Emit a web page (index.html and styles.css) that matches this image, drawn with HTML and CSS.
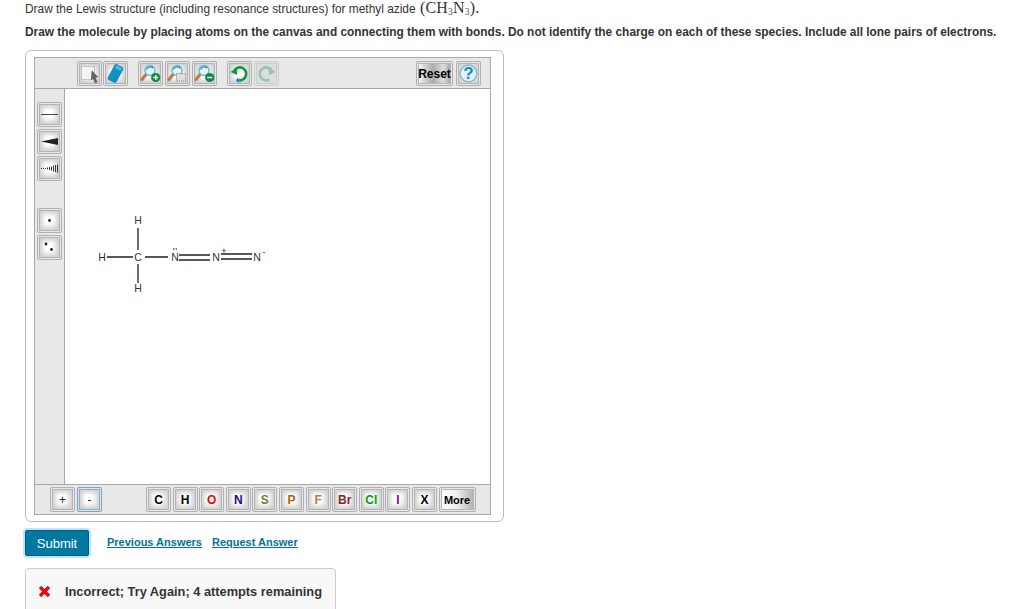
FILE: index.html
```html
<!DOCTYPE html>
<html lang="en">
<head>
<meta charset="utf-8">
<title>Lewis structure</title>
<link rel="stylesheet" href="styles.css">
</head>
<body>
<main class="page">
  <p class="prompt">Draw the Lewis structure (including resonance structures) for methyl azide <span class="formula">(CH<sub>3</sub>N<sub>3</sub>).</span></p>
  <p class="instr">Draw the molecule by placing atoms on the canvas and connecting them with bonds. Do not identify the charge on each of these species. Include all lone pairs of electrons.</p>

  <section class="panel">
    <div class="editor">
      <div class="toolbar">
        <div class="group tight">
          <button class="tool" aria-label="Select"><svg class="ico" viewBox="0 0 25 25"><rect x="4.500" y="5.500" width="13" height="13" fill="#f4f4f4" stroke="#999" stroke-dasharray="1 1"/><path d="M15 10l5.500 6-2.500 .3 2 4.700-1.800 .7-2-4.700-1.800 1.800z" fill="#666" stroke="#333" stroke-width=".5"/></svg></button>
          <button class="tool" aria-label="Erase"><svg class="ico" viewBox="0 0 25 25"><rect x="7.500" y="3.500" width="10" height="18" rx="2.500" fill="#0f93c4" transform="rotate(28 12.500 12.500)"/><path d="M13.500 4.200l5.500 2.900-1.500 3-5.500-2.900z" fill="#4db8dc"/></svg></button>
        </div>
        <div class="group">
          <button class="tool" aria-label="Zoom in"><svg class="ico" viewBox="0 0 25 25"><path d="M8 13.500l-4 5" stroke="#c07a35" stroke-width="3" stroke-linecap="round"/><circle cx="12" cy="9.500" r="5" fill="#e4f4fa" stroke="#6bb8d6" stroke-width="1.500"/><path d="M8.500 8.500a4 4 0 0 1 6.500-1.500" fill="none" stroke="#1f86b0" stroke-width="1.200"/><circle cx="17.700" cy="16.500" r="4.600" fill="#108a3c"/><path d="M15.200 16.500h5M17.700 14v5" stroke="#fff" stroke-width="1.400"/></svg></button>
          <button class="tool" aria-label="Zoom fit"><svg class="ico" viewBox="0 0 25 25"><path d="M8 13.500l-4 5" stroke="#c07a35" stroke-width="3" stroke-linecap="round"/><circle cx="12" cy="9.500" r="5" fill="#e4f4fa" stroke="#6bb8d6" stroke-width="1.500"/><path d="M8.500 8.500a4 4 0 0 1 6.500-1.500" fill="none" stroke="#1f86b0" stroke-width="1.200"/><rect x="11.500" y="12.500" width="9" height="7.500" fill="#ddd" stroke="#888" stroke-dasharray="1 1"/></svg></button>
          <button class="tool" aria-label="Zoom out"><svg class="ico" viewBox="0 0 25 25"><path d="M8 13.500l-4 5" stroke="#c07a35" stroke-width="3" stroke-linecap="round"/><circle cx="12" cy="9.500" r="5" fill="#e4f4fa" stroke="#6bb8d6" stroke-width="1.500"/><path d="M8.500 8.500a4 4 0 0 1 6.500-1.500" fill="none" stroke="#1f86b0" stroke-width="1.200"/><circle cx="17.700" cy="16.500" r="4.600" fill="#108a4c"/><path d="M15.200 16.500h5" stroke="#fff" stroke-width="1.400"/></svg></button>
        </div>
        <div class="group">
          <button class="tool" aria-label="Undo"><svg class="ico" viewBox="0 0 25 25"><path d="M7.500 9a6.500 6.500 0 1 1 2 9.500" fill="none" stroke="#0c9a3c" stroke-width="2.600"/><path d="M3.500 11l7-5-.5 8z" fill="#0c9a3c"/><circle cx="11.500" cy="19.500" r="2" fill="#2f8fc0"/></svg></button>
          <button class="tool off" aria-label="Redo"><svg class="ico" viewBox="0 0 25 25"><path d="M17.500 9a6.500 6.500 0 1 0-2 9.500" fill="none" stroke="#0c9a6c" stroke-width="2.600"/><path d="M21.500 11l-7-5 .5 8z" fill="#0c9a6c"/></svg></button>
        </div>
        <div class="group end">
          <button class="tool wide-reset">Reset</button>
          <button class="tool help">?</button>
        </div>
      </div>

      <div class="side">
        <div class="stack">
          <button class="tool" aria-label="Single bond"><svg class="ico" viewBox="0 0 25 25"><path d="M4 12.500h17" stroke="#444" stroke-width="1"/></svg></button>
          <button class="tool" aria-label="Wedge bond"><svg class="ico" viewBox="0 0 25 25"><path d="M4 12.500l17-3.500v7z" fill="#222"/></svg></button>
          <button class="tool" aria-label="Hash bond"><svg class="ico" viewBox="0 0 25 25"><path d="M4.500 12v1M6.500 12v1M8.500 12v1M10.500 11.500v2M12.500 11v3M14.500 10.500v4M16.500 9.500v6M18.500 9v7M20.500 8.500v8" stroke="#333" stroke-width="1"/></svg></button>
        </div>
        <div class="stack">
          <button class="tool" aria-label="Lone electron"><svg class="ico" viewBox="0 0 25 25"><circle cx="12.500" cy="12.500" r="1.400" fill="#222"/></svg></button>
          <button class="tool" aria-label="Lone pair"><svg class="ico" viewBox="0 0 25 25"><circle cx="9" cy="9" r="1.400" fill="#222"/><circle cx="14.500" cy="14.500" r="1.400" fill="#222"/></svg></button>
        </div>
      </div>

      <div class="canvas">
        <svg class="molecule" viewBox="0 0 425 395">
          <path class="bonds" d="M73 139v22M73 175v19M42 168h26M80 168h23M114 166h31M114 171h31M156 165h31M156 170h31"/>
          <circle class="dot" cx="108.700" cy="160" r=".8"/>
          <circle class="dot" cx="111.300" cy="160" r=".8"/>
          <text x="73" y="135">H</text>
          <text x="37" y="172">H</text>
          <text x="73" y="172">C</text>
          <text x="73" y="203">H</text>
          <text x="110" y="172">N</text>
          <text x="151" y="172">N</text>
          <text x="192" y="172">N</text>
          <text x="159" y="165" class="small">+</text>
          <text x="199" y="166" class="small">-</text>
        </svg>
      </div>

      <div class="bottom">
        <div class="group sign">
          <button class="tool plain">+</button>
          <button class="tool plain active">-</button>
        </div>
        <div class="group atoms">
          <button class="tool atom">C</button>
          <button class="tool atom">H</button>
          <button class="tool atom c-o">O</button>
          <button class="tool atom c-n">N</button>
          <button class="tool atom c-s">S</button>
          <button class="tool atom c-p">P</button>
          <button class="tool atom c-f">F</button>
          <button class="tool atom c-br">Br</button>
          <button class="tool atom c-cl">Cl</button>
          <button class="tool atom c-i">I</button>
          <button class="tool atom">X</button>
          <button class="tool atom more">More</button>
        </div>
      </div>
    </div>
  </section>

  <div class="actions">
    <button class="submit">Submit</button>
    <a class="link" href="#">Previous Answers</a>
    <a class="link" href="#">Request Answer</a>
  </div>

  <div class="feedback">
    <svg class="cross" viewBox="0 0 13 13"><path d="M2 2l9 9M11 2l-9 9" stroke="#e8090f" stroke-width="3.400"/></svg>
    <span>Incorrect; Try Again; 4 attempts remaining</span>
  </div>
</main>
</body>
</html>
```

FILE: styles.css
```css
* { box-sizing: border-box; }
html, body { margin: 0; height: 609px; overflow: hidden; background: #fff; }
body { font-family: "Liberation Sans", Arial, sans-serif; color: #333; }
.page { padding: 0 0 0 25px; }

.prompt { margin: 0; height: 18px; font-size: 11.900px; line-height: 16px; white-space: nowrap; }
.formula { font-family: "Liberation Serif", serif; font-size: 16px; margin-left: 1px; letter-spacing: .2px; color: #333; }
.formula sub { font-size: 9.500px; line-height: 0; vertical-align: -2px; color: #555; }
.instr { margin: 8px 0 0; height: 16px; font-size: 11.880px; line-height: 13px; font-weight: 700; white-space: nowrap; }

.panel { width: 479px; height: 472px; margin-top: 8px; padding: 6px 12px 6px 8px; border: 1px solid #bbb; border-radius: 6px; }
.editor { display: grid; grid-template-columns: 30px 1fr; grid-template-rows: 31px 395px 30px; height: 458px; border: 1px solid #a8a8a8; background: #e8e8e8; }

.toolbar { grid-column: 1 / -1; display: flex; gap: 10px; padding: 3px 9px 0 42px; border-bottom: 1px solid #a8a8a8; }
.group { display: flex; gap: 2px; }
.group.tight { gap: 1px; }
.group.end { margin-left: auto; gap: 3px; }

.tool { display: flex; align-items: center; justify-content: center; flex: none; width: 25px; height: 25px; padding: 0; border: 1px solid #b0b0b0; border-radius: 2px; background: radial-gradient(ellipse at 45% 45%, #fff 20%, #ececec 55%, #c8c8c8 100%); box-shadow: inset 0 0 0 1px #e8e8e8, inset 0 0 0 2px #b4b4b4, inset 0 0 4px 4px #cfcfcf; font-family: "Liberation Sans", Arial, sans-serif; color: #000; }
.ico { display: block; width: 25px; height: 25px; flex: none; margin: -1px; }
.tool.off { background: #ddd; box-shadow: inset 0 0 0 1px #e4e4e4, inset 0 0 0 2px #ccc; border-color: #ccc; }
.tool.off .ico { opacity: .35; }
.wide-reset { width: 37px; font-size: 12px; font-weight: 700; background: linear-gradient(90deg, #fff 0, #aaa 45%, #ddd 75%, #999 100%); box-shadow: inset 0 0 0 1px #e8e8e8, inset 0 0 0 2px #b4b4b4; }
.help { font-size: 17px; font-weight: 700; color: #0d8fc0; background: radial-gradient(circle at 50% 50%, #e4f2f7 0 7px, #8fb4c4 8px, #ddd 10px, #bbb 100%); box-shadow: inset 0 0 0 1px #e8e8e8, inset 0 0 0 2px #b4b4b4; }

.side { display: flex; flex-direction: column; gap: 27px; padding: 13px 0 0 2px; border-right: 1px solid #a8a8a8; }
.stack { display: flex; flex-direction: column; gap: 2px; }

.canvas { background: #fff; }
.molecule { display: block; width: 425px; height: 395px; }
.bonds { fill: none; stroke: #222; stroke-width: 1.300; }
.dot { fill: #222; }
.molecule text { font-family: "Liberation Sans", Arial, sans-serif; font-size: 10.500px; fill: #333; text-anchor: middle; }
.molecule text.small { font-size: 9px; fill: #222; }

.bottom { grid-column: 1 / -1; display: flex; gap: 44px; padding: 2px 0 0 15px; border-top: 1px solid #a8a8a8; }
.sign { gap: 2px; }
.atoms { gap: 1.600px; }
.plain { font-size: 12px; color: #222; }
.active { border-color: #7d9fc0; box-shadow: inset 0 0 0 1px #dce8f2, inset 0 0 0 2px #8fa9c2, inset 0 0 4px 4px #cfcfcf; }
.atom { font-size: 12px; font-weight: 700; }
.more { width: 37px; font-size: 11px; background: linear-gradient(90deg, #fff 0, #eee 50%, #aaa 100%); box-shadow: inset 0 0 0 1px #e8e8e8, inset 0 0 0 2px #b4b4b4; }
.c-o { color: #f00000; }
.c-n { color: #300090; }
.c-s { color: #7a7a30; }
.c-p { color: #b06000; }
.c-f { color: #b08030; }
.c-br { color: #802828; }
.c-cl { color: #00a000; }
.c-i { color: #900090; }

.actions { display: flex; align-items: center; gap: 10px; height: 26px; margin-top: 8px; }
.submit { width: 64px; height: 26px; margin-right: 8px; padding: 0; border: 1px solid #005f7f; border-radius: 2px; background: #00789f; box-shadow: 0 0 0 2px #bfe3f8; color: #fff; font-family: "Liberation Sans", Arial, sans-serif; font-size: 13px; }
.link { color: #00739a; font-size: 11px; font-weight: 700; position: relative; top: -1px; }

.feedback { display: flex; align-items: center; width: 311px; height: 46px; margin-top: 12px; padding-left: 12px; gap: 14px; border: 1px solid #ccc; border-radius: 4px; background: #f8f8f8; font-size: 12.800px; font-weight: 700; color: #333; white-space: nowrap; }
.cross { width: 13px; height: 13px; flex: none; }
```
